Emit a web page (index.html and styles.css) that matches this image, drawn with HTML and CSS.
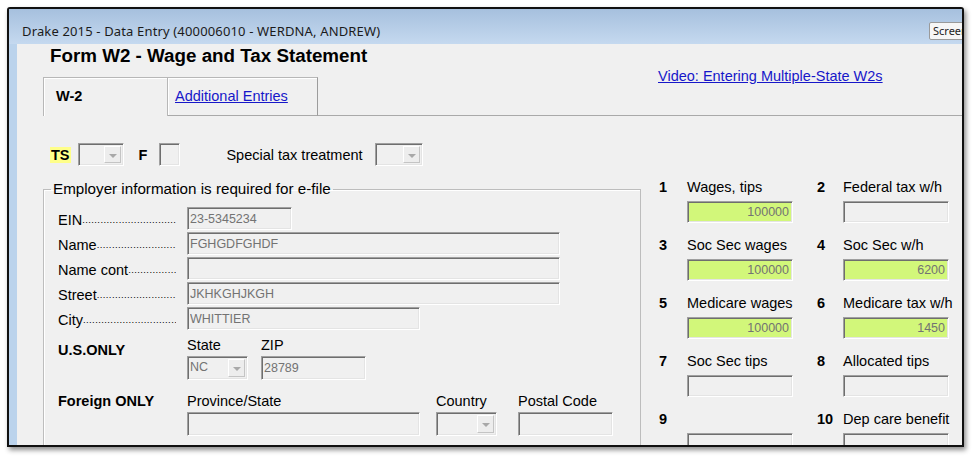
FILE: index.html
```html
<html>
  <head>
    <title>Drake 2015 - Data Entry</title>
    <link rel="stylesheet" href="styles.css">
  </head>
<body>
  <div class="window">
    <div class="titlebar">
      <span class="caption">Drake 2015 - Data Entry (400006010 - WERDNA, ANDREW)</span>
      <button class="scr">Screen</button>
    </div>
    <div class="frame">
      <div class="edge"></div>
      <div class="pane">
        <h1>Form W2 - Wage and Tax Statement</h1>

        <div class="tabs">
          <div class="tab active">W-2</div>
          <div class="tab"><a href="#">Additional Entries</a></div>
          <div class="tab-fill"><a href="#" class="video">Video: Entering Multiple-State W2s</a></div>
        </div>

        <div class="ts-row">
          <b class="ts">TS</b>
          <div class="field combo w46"><i class="drop"></i></div>
          <b class="f">F</b>
          <input class="field w21" readonly>
          <span class="stt">Special tax treatment</span>
          <div class="field combo w48"><i class="drop"></i></div>
        </div>

        <div class="body">
          <fieldset class="employer">
            <legend>Employer information is required for e-file</legend>
            <div class="rows">
              <label class="lbl">EIN<span class="dots"></span></label>
              <input class="field w105" readonly value="23-5345234">
              <label class="lbl">Name<span class="dots"></span></label>
              <input class="field w373" readonly value="FGHGDFGHDF">
              <label class="lbl">Name cont<span class="dots"></span></label>
              <input class="field w373" readonly>
              <label class="lbl">Street<span class="dots"></span></label>
              <input class="field w373" readonly value="JKHKGHJKGH">
              <label class="lbl">City<span class="dots"></span></label>
              <input class="field w233" readonly value="WHITTIER">
            </div>

            <div class="region us">
              <b class="region-name">U.S.ONLY</b>
              <div class="groups">
                <div class="group">
                  <span>State</span>
                  <div class="field combo w61 tall">NC<i class="drop"></i></div>
                </div>
                <div class="group zip">
                  <span>ZIP</span>
                  <input class="field w105 tall" readonly value="28789">
                </div>
              </div>
            </div>

            <div class="region foreign">
              <b class="region-name">Foreign ONLY</b>
              <div class="groups">
                <div class="group">
                  <span>Province/State</span>
                  <input class="field w233 tall" readonly>
                </div>
                <div class="group country">
                  <span>Country</span>
                  <div class="field combo w61 tall"><i class="drop"></i></div>
                </div>
                <div class="group postal">
                  <span>Postal Code</span>
                  <input class="field w95 tall" readonly>
                </div>
              </div>
            </div>
          </fieldset>

          <div class="boxes">
            <div class="box"><b>1</b><span>Wages, tips</span><input class="field amt green" readonly value="100000"></div>
            <div class="box"><b>2</b><span>Federal tax w/h</span><input class="field amt" readonly></div>
            <div class="box"><b>3</b><span>Soc Sec wages</span><input class="field amt green" readonly value="100000"></div>
            <div class="box"><b>4</b><span>Soc Sec w/h</span><input class="field amt green" readonly value="6200"></div>
            <div class="box"><b>5</b><span>Medicare wages</span><input class="field amt green" readonly value="100000"></div>
            <div class="box"><b>6</b><span>Medicare tax w/h</span><input class="field amt green" readonly value="1450"></div>
            <div class="box"><b>7</b><span>Soc Sec tips</span><input class="field amt" readonly></div>
            <div class="box"><b>8</b><span>Allocated tips</span><input class="field amt" readonly></div>
            <div class="box"><b>9</b><span></span><input class="field amt" readonly></div>
            <div class="box"><b>10</b><span>Dep care benefit</span><input class="field amt" readonly></div>
          </div>
        </div>
      </div>
    </div>
  </div>
</body>
</html>
```

FILE: styles.css
```css
html { background:#fff; }

body {
  margin:0;
  font:14.5px "Liberation Sans", Arial, sans-serif;
  color:#000;
}

a { color:#1717c9; text-decoration:underline; }

/* window chrome */
.window {
  margin:7px 0 0 7px;
  width:953px; height:436px;
  border:2px solid #111;
  border-radius:3px 3px 0 0;
  box-shadow:2px 3px 5px rgba(0,0,0,.45);
  overflow:hidden;
  display:flex; flex-direction:column;
  background:#f0f0f0;
}

.titlebar {
  height:35px; box-sizing:border-box;
  display:flex; align-items:center;
  padding:12px 0 4px 13px;
  background:linear-gradient(#a6c0de, #c5d9ef);
  font:13px "Noto Sans", sans-serif;
  letter-spacing:.15px;
  color:#1b1b1b;
}
.titlebar .scr {
  margin-left:auto; margin-right:-28px;
  width:61px; height:18px; flex-shrink:0;
  padding:0 0 0 3px; text-align:left;
  font:11px "Noto Sans", sans-serif; color:#222;
  background:#f6f6f6;
  border:1px solid #9a9a9a; border-radius:2px;
}

.frame { flex:1; display:flex; min-height:0; }
.edge { width:8px; background:#bbd3ec; }
.pane { flex:1; overflow:hidden; padding:2px 0 0 26px; }

h1 { margin:0 0 0 7px; font:bold 18.8px/20px "Liberation Sans", Arial, sans-serif; }

/* tabs */
.tabs { display:flex; margin-top:11px; height:39px; }
.tab {
  box-sizing:border-box; width:125px;
  display:flex; align-items:center;
  padding:0 12px 2px;
  border:1px solid #b7b7b7; border-bottom:none;
  box-shadow:inset 1px 1px #fff;
  font-weight:bold;
}
.tab + .tab {
  width:150px; padding-left:7px;
  border-left:none; border-right-color:#9c9c9c;
  border-bottom:1px solid #a9a9a9;
  font-weight:normal;
}
.tab-fill { flex:1; border-bottom:1px solid #a9a9a9; padding-left:340px; }
.video { display:inline-block; margin-top:-9px; line-height:16px; }

/* TS row */
.ts-row { display:flex; align-items:center; height:23px; margin-top:27px; padding-left:7px; }
.ts { background:#ffff8a; padding:0 1px; line-height:16px; margin-right:7px; }
.ts-row .w46 { margin-right:15px; }
.f { margin-right:12px; }
.stt { margin-left:46px; margin-right:12px; }

/* sunken fields */
.field {
  display:block; box-sizing:border-box;
  height:23px; margin:0; padding:0 3px 0 2px;
  background:#f0f0f0;
  border:1px solid; border-color:#a0a0a0 #fff #fff #a0a0a0;
  box-shadow:inset 1px 1px #6e6e6e, inset -1px -1px #e4e4e4;
  font:12.5px "Liberation Sans", Arial, sans-serif;
  color:#737373;
  outline:none;
}
.field.tall { height:24px; }
.combo { position:relative; line-height:21px; }
.drop {
  position:absolute; right:2px; top:2px; bottom:2px; width:17px;
  box-sizing:border-box;
  border:1px solid; border-color:#fff #c4c4c4 #c4c4c4 #fff;
  background:#ededed;
}
.drop::after {
  content:""; position:absolute; left:4px; top:7px;
  border:4px solid transparent; border-top:4px solid #a8a8a8; border-bottom:none;
}

.w21 { width:21px; }
.w46 { width:46px; }
.w48 { width:48px; }
.w61 { width:61px; }
.w95 { width:95px; }
.w105 { width:105px; }
.w233 { width:233px; }
.w373 { width:373px; }

/* main area */
.body { display:flex; align-items:flex-start; gap:18px; margin-top:15px; }

.employer {
  width:598px; box-sizing:border-box;
  margin:0; padding:0 0 30px 7px;
  border:1px solid #bdbdbd;
  box-shadow:inset 1px 1px #fff;
}
.employer legend { padding:0 2px; line-height:16px; font-size:15.2px; }

.rows {
  display:grid; grid-template-columns:129px auto;
  row-gap:2px; align-items:center; justify-items:start;
  margin-top:10px; padding-left:7px;
}
.lbl {
  display:flex; width:129px; box-sizing:border-box;
  padding:3px 11px 0 0; line-height:16px;
  white-space:nowrap;
}
.dots { flex:1; overflow:hidden; font-size:9.5px; letter-spacing:.4px; }
.dots::after { content:"........................................................"; }

.region { display:grid; grid-template-columns:129px auto; padding-left:7px; }
.region.us { margin-top:7px; }
.region.foreign { margin-top:13px; }
.region-name { padding-top:5px; line-height:16px; }
.region.foreign .region-name { padding-top:0; }
.groups { display:flex; }
.group { display:flex; flex-direction:column; gap:3px; line-height:16px; }
.group.zip { margin-left:13px; }
.group.country { margin-left:16px; }
.group.postal { margin-left:21px; }

/* W2 boxes */
.boxes {
  display:grid; grid-template-columns:134px 132px;
  column-gap:24px; row-gap:14px;
  margin-top:-2px;
}
.box { display:grid; grid-template-columns:28px 106px; grid-template-rows:16px 22px; row-gap:6px; line-height:16px; white-space:nowrap; }
.box:nth-child(even) { grid-template-columns:26px 106px; }
.box .field { grid-column:2; width:106px; height:22px; }
.amt { text-align:right; }
.green { background:#d2f77a; }
```
